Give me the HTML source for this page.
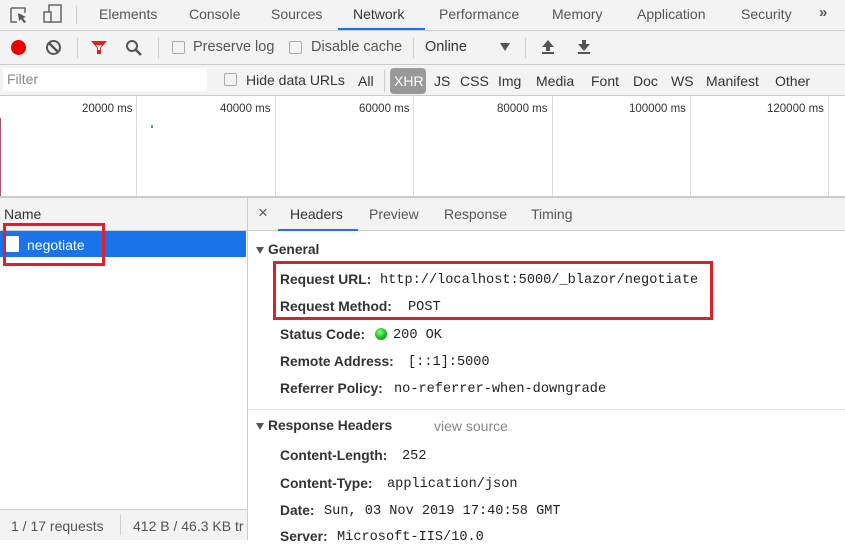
<!DOCTYPE html>
<html><head><style>
*{margin:0;padding:0;box-sizing:border-box}
body{width:845px;height:540px;overflow:hidden;background:#fff;font-family:"Liberation Sans",sans-serif;font-size:14px;color:#333;position:relative}
.a{position:absolute;white-space:nowrap}
.bar{position:absolute;left:0;width:845px;background:#f3f3f3;border-bottom:1px solid #ccc}
.g{color:#555}
.cb{position:absolute;width:13px;height:13px;border:1px solid #aaa;border-radius:2px;background:#f3f3f3}
.vl{position:absolute;width:1px;background:#ccc}
.b{font-weight:bold;color:#333;font-size:13.8px}
.m{font-family:"Liberation Mono",monospace;font-size:13.6px;color:#222}
.tl{position:absolute;top:96px;height:100px;width:1px;background:#ddd}
.ms{position:absolute;top:103px;font-size:11.5px;color:#333}
.tri{position:absolute;border-left:4px solid transparent;border-right:4px solid transparent;border-top:7px solid #555}
</style></head><body>
<div class="bar" style="top:0;height:31px"></div>
<svg class="a" style="left:10px;top:6px" width="18" height="18"><path d="M1 2h14v5M1 2v14h6" stroke="#666" stroke-width="1.5" fill="none"/><path d="M8 7l8 4-3 1 3 4-2 1-3-4-2 2z" fill="#555"/></svg>
<svg class="a" style="left:43px;top:4px" width="20" height="20"><rect x="6" y="1" width="12" height="17" stroke="#666" stroke-width="1.5" fill="none"/><rect x="1" y="8" width="7" height="10" stroke="#666" stroke-width="1.5" fill="#f3f3f3"/></svg>
<div class="vl" style="left:76px;top:6px;height:18px"></div>
<div class="a g" style="left:99px;top:6px">Elements</div>
<div class="a g" style="left:189px;top:6px">Console</div>
<div class="a g" style="left:271px;top:6px">Sources</div>
<div class="a" style="left:353px;top:6px;color:#333">Network</div>
<div class="a" style="left:338px;top:28px;width:87px;height:2px;background:#1a73e8"></div>
<div class="a g" style="left:439px;top:6px">Performance</div>
<div class="a g" style="left:552px;top:6px">Memory</div>
<div class="a g" style="left:637px;top:6px">Application</div>
<div class="a g" style="left:741px;top:6px">Security</div>
<div class="a g" style="left:819px;top:4px;font-size:15px;font-weight:bold">»</div>
<div class="bar" style="top:31px;height:34px"></div>
<div class="a" style="left:11px;top:40px;width:15px;height:15px;border-radius:50%;background:#e00"></div>
<div class="a" style="left:46px;top:40px;width:15px;height:15px;border-radius:50%;border:2.5px solid #555"></div>
<svg class="a" style="left:46px;top:40px" width="15" height="15"><path d="M3 3l9 9" stroke="#555" stroke-width="2.5"/></svg>
<div class="vl" style="left:77px;top:38px;height:20px"></div>
<svg class="a" style="left:90px;top:40px" width="18" height="16"><path d="M1 1h16l-6 7v6h-4v-6z" fill="#e02020"/><path d="M6 5h6l-2 3v2h-2v-2z" fill="#f3f3f3"/></svg>
<svg class="a" style="left:125px;top:39px" width="18" height="18"><circle cx="7" cy="7" r="5" stroke="#555" stroke-width="2" fill="none"/><path d="M11 11l5 5" stroke="#555" stroke-width="2.5"/></svg>
<div class="vl" style="left:158px;top:38px;height:20px"></div>
<div class="cb" style="left:172px;top:41px"></div>
<div class="a g" style="left:193px;top:39px;font-size:14.5px">Preserve log</div>
<div class="cb" style="left:289px;top:41px"></div>
<div class="a g" style="left:311px;top:39px;font-size:14.5px">Disable cache</div>
<div class="vl" style="left:413px;top:38px;height:20px"></div>
<div class="a" style="left:425px;top:39px;color:#333;font-size:14.5px">Online</div>
<div class="a" style="left:500px;top:43px;border-left:5px solid transparent;border-right:5px solid transparent;border-top:8px solid #555"></div>
<div class="vl" style="left:525px;top:38px;height:20px"></div>
<svg class="a" style="left:541px;top:39px" width="14" height="16"><path d="M7 1l6 7h-4v4h-4v-4h-4z" fill="#555"/><rect x="1" y="13" width="12" height="2" fill="#555"/></svg>
<svg class="a" style="left:577px;top:39px" width="14" height="16"><path d="M7 12l6-7h-4v-4h-4v4h-4z" fill="#555"/><rect x="1" y="13" width="12" height="2" fill="#555"/></svg>
<div class="bar" style="top:65px;height:31px"></div>
<div class="a" style="left:3px;top:68px;width:204px;height:23px;background:#fff"></div>
<div class="a" style="left:7px;top:71px;color:#888">Filter</div>
<div class="cb" style="left:224px;top:73px"></div>
<div class="a" style="left:246px;top:72px">Hide data URLs</div>
<div class="a" style="left:358px;top:73px">All</div>
<div class="vl" style="left:384px;top:70px;height:22px"></div>
<div class="a" style="left:390px;top:68px;width:36px;height:26px;background:#999;border-radius:4px;color:#fff;padding:5px 0 0 4px">XHR</div>
<div class="a" style="left:434px;top:73px">JS</div>
<div class="a" style="left:460px;top:73px">CSS</div>
<div class="a" style="left:498px;top:73px">Img</div>
<div class="a" style="left:536px;top:73px">Media</div>
<div class="a" style="left:591px;top:73px">Font</div>
<div class="a" style="left:633px;top:73px">Doc</div>
<div class="a" style="left:671px;top:73px">WS</div>
<div class="a" style="left:706px;top:73px">Manifest</div>
<div class="a" style="left:775px;top:73px">Other</div>
<div class="tl" style="left:136px"></div><div class="tl" style="left:275px"></div><div class="tl" style="left:413px"></div><div class="tl" style="left:552px"></div><div class="tl" style="left:690px"></div><div class="tl" style="left:828px"></div>
<div class="a" style="left:0;top:118px;width:1px;height:78px;background:#a56"></div>
<div class="ms" style="left:82px">20000 ms</div>
<div class="ms" style="left:220px">40000 ms</div>
<div class="ms" style="left:359px">60000 ms</div>
<div class="ms" style="left:497px">80000 ms</div>
<div class="ms" style="left:629px">100000 ms</div>
<div class="ms" style="left:767px">120000 ms</div>
<div class="a" style="left:151px;top:125px;width:2px;height:3px;background:#3aa"></div>
<div class="a" style="left:0;top:196px;width:845px;height:2px;background:#ccc"></div>
<div class="a" style="left:0;top:198px;width:247px;height:33px;background:#f3f3f3;border-bottom:1px solid #ccc"></div>
<div class="a" style="left:4px;top:206px">Name</div>
<div class="a" style="left:0;top:231px;width:246px;height:26px;background:#1a73e8"></div>
<div class="a" style="left:6px;top:236px;width:13px;height:16px;background:#fff;border-radius:1px"></div>
<div class="a" style="left:27px;top:237px;color:#fff">negotiate</div>
<div class="a" style="left:3px;top:223px;width:102px;height:43px;border:3px solid #d9222b"></div>
<div class="a" style="left:247px;top:198px;width:1px;height:342px;background:#ccc"></div>
<div class="a" style="left:0;top:509px;width:247px;height:31px;background:#f3f3f3;border-top:1px solid #ccc"></div>
<div class="a" style="left:11px;top:518px;color:#555">1 / 17 requests</div>
<div class="vl" style="left:120px;top:515px;height:20px"></div>
<div class="a" style="left:133px;top:518px;color:#555;width:114px;overflow:hidden">412 B / 46.3 KB tr</div>
<div class="a" style="left:248px;top:198px;width:597px;height:33px;background:#f3f3f3;border-bottom:1px solid #ccc"></div>
<div class="a" style="left:258px;top:203px;color:#555;font-size:17px">×</div>
<div class="a" style="left:290px;top:206px">Headers</div>
<div class="a" style="left:278px;top:229px;width:80px;height:2px;background:#1a73e8"></div>
<div class="a g" style="left:369px;top:206px">Preview</div>
<div class="a g" style="left:444px;top:206px">Response</div>
<div class="a g" style="left:531px;top:206px">Timing</div>
<div class="tri" style="left:256px;top:247px"></div>
<div class="a b" style="left:268px;top:242px">General</div>
<div class="a b" style="left:280px;top:272px">Request URL:</div><div class="a m" style="left:380px;top:273px">http://localhost:5000/_blazor/negotiate</div>
<div class="a b" style="left:280px;top:299px">Request Method:</div><div class="a m" style="left:408px;top:300px">POST</div>
<div class="a" style="left:273px;top:261px;width:440px;height:59px;border:3px solid #d9222b"></div>
<div class="a b" style="left:280px;top:327px">Status Code:</div>
<div class="a" style="left:375px;top:328px;width:12px;height:12px;border-radius:50%;background:radial-gradient(circle at 40% 35%,#8f8,#0a0 70%)"></div>
<div class="a m" style="left:393px;top:328px">200 OK</div>
<div class="a b" style="left:280px;top:354px">Remote Address:</div><div class="a m" style="left:408px;top:355px">[::1]:5000</div>
<div class="a b" style="left:280px;top:381px">Referrer Policy:</div><div class="a m" style="left:394px;top:382px">no-referrer-when-downgrade</div>
<div class="a" style="left:248px;top:409px;width:597px;height:1px;background:#ddd"></div>
<div class="tri" style="left:256px;top:423px"></div>
<div class="a b" style="left:268px;top:418px">Response Headers</div>
<div class="a" style="left:434px;top:418px;color:#888">view source</div>
<div class="a b" style="left:280px;top:448px">Content-Length:</div><div class="a m" style="left:402px;top:449px">252</div>
<div class="a b" style="left:280px;top:476px">Content-Type:</div><div class="a m" style="left:387px;top:477px">application/json</div>
<div class="a b" style="left:280px;top:503px">Date:</div><div class="a m" style="left:324px;top:504px">Sun, 03 Nov 2019 17:40:58 GMT</div>
<div class="a b" style="left:280px;top:529px">Server:</div><div class="a m" style="left:337px;top:530px">Microsoft-IIS/10.0</div>
</body></html>
